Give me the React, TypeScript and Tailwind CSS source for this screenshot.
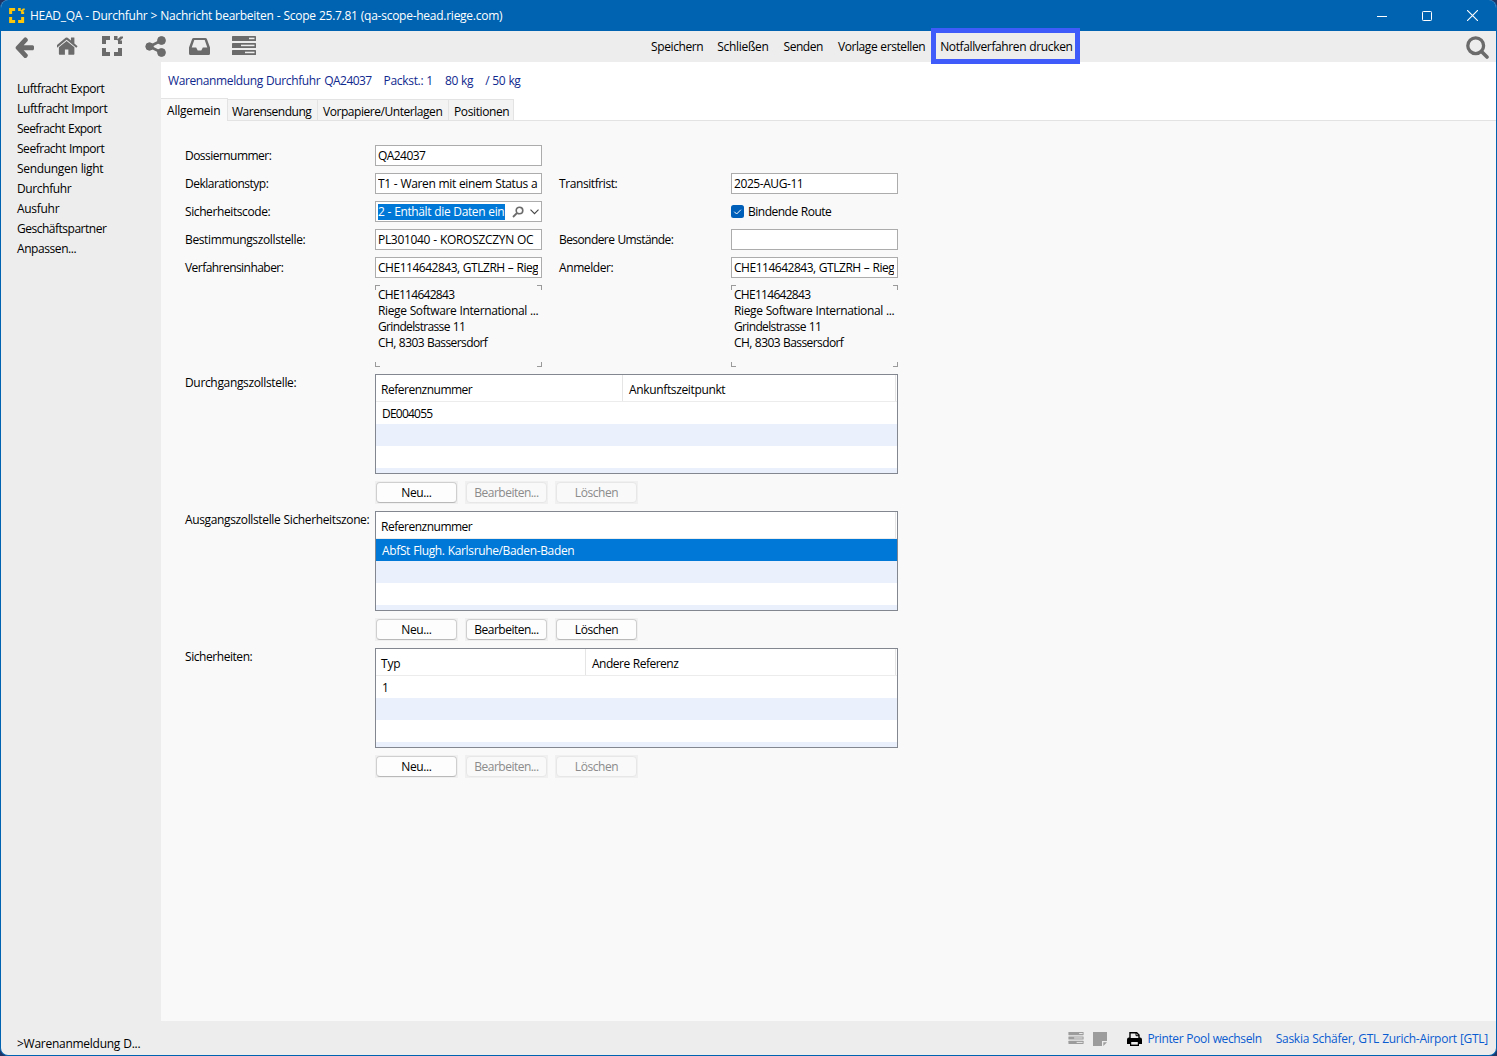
import { useLayoutEffect, useRef, useState } from "react";
import type { ReactNode } from "react";

/* Text whose tracking is fitted to a given width; word gaps keep their natural size. */
function Fit({ w, children, className = "" }: { w: number; children: string; className?: string }) {
  const ref = useRef<HTMLSpanElement>(null);
  const [spacing, setSpacing] = useState(0);
  useLayoutEffect(() => {
    if (ref.current) {
      const letters = children.replace(/ /g, "").length;
      const natural = ref.current.getBoundingClientRect().width - spacing * letters;
      setSpacing((w - 0.7 - natural) / letters);
    }
  }, [w, children]);
  return (
    <span
      ref={ref}
      className={`inline-block whitespace-pre ${className}`}
      style={{ letterSpacing: `${spacing}px`, wordSpacing: `${-spacing}px` }}
    >
      {children}
    </span>
  );
}

const nav: [string, number][] = [
  ["Luftfracht Export", 88],
  ["Luftfracht Import", 91],
  ["Seefracht Export", 85],
  ["Seefracht Import", 88],
  ["Sendungen light", 87],
  ["Durchfuhr", 55],
  ["Ausfuhr", 43],
  ["Geschäftspartner", 90],
  ["Anpassen...", 60],
];

function ScopeLogo({ className, color }: { className: string; color: string }) {
  return (
    <svg viewBox="0 0 21 20" className={className} fill={color}>
      <path d="M0 0h8v4H4v4H0zM0 12h4v4h4v4H0zM20 12v8h-8v-4h4v-4zM12 0h3.500v4H12zM16 4.500h4V8h-4zM15.500 4.500V3.300L18.500 0.500H21V2L18 4.500z" />
    </svg>
  );
}

function ArrowIcon() {
  return (
    <svg viewBox="64 160 1600 1570" className="h-[21px] w-5" preserveAspectRatio="none" fill="#6b6b6b">
      <path d="M1664 896v128q0 53-32.500 90.500t-84.500 37.500h-704l293 294q38 36 38 90t-38 90l-75 76q-37 37-90 37-52 0-91-37l-651-652q-37-37-37-90 0-52 37-91l651-650q38-38 91-38 52 0 90 38l75 74q38 38 38 91t-38 91l-293 293h704q52 0 84.500 37.500t32.500 90.500z" />
    </svg>
  );
}

function HomeIcon() {
  return (
    <svg viewBox="50 220 1560 1330" className="h-[18px] w-[21px]" preserveAspectRatio="none" fill="#6b6b6b">
      <path transform="translate(-66 0)" d="M1408 992v480q0 26-19 45t-45 19h-384v-384h-256v384h-384q-26 0-45-19t-19-45v-480q0-1 .5-3t.5-3l575-474 575 474q1 2 1 6zm223-69l-62 74q-8 9-21 11h-3q-13 0-21-7l-692-577-692 577q-12 8-24 7-13-2-21-11l-62-74q-8-10-7-23.500t11-21.500l719-599q32-26 76-26t76 26l244 204v-195q0-14 9-23t23-9h192q14 0 23 9t9 23v408l219 182q10 8 11 21.500t-7 23.500z" />
    </svg>
  );
}

function ShareIcon() {
  return (
    <svg viewBox="0 0 21 21" className="size-[21px]" fill="#6b6b6b" stroke="#6b6b6b">
      <path d="M16.500 4.500L4.500 10.500l12 6" fill="none" strokeWidth="2.600" />
      <circle cx="16.500" cy="4.500" r="3.900" />
      <circle cx="4.500" cy="10.500" r="3.700" />
      <circle cx="16.500" cy="16.500" r="3.900" />
    </svg>
  );
}

function InboxIcon() {
  return (
    <svg viewBox="0 0 21 17" className="h-[17px] w-[21px]" fill="#6b6b6b" fillRule="evenodd">
      <path d="M4.700 0h11.600q1.200 0 1.600 1.100L21 9.500v6q0 1.500-1.500 1.500h-18Q0 17 0 15.500v-6L3.100 1.100Q3.500 0 4.700 0zM5.300 2L2.700 9.500h4.500l1.500 3h3.600l1.500-3h4.500L15.700 2z" />
    </svg>
  );
}

function ServerIcon({ className, color, gap }: { className: string; color: string; gap: string }) {
  return (
    <svg viewBox="0 0 24 19" className={className}>
      <g fill={color}>
        <rect width="24" height="5" rx="0.600" />
        <rect y="7" width="24" height="5" rx="0.600" />
        <rect y="14" width="24" height="5" rx="0.600" />
      </g>
      <g fill={gap}>
        <rect x="17" y="1.700" width="5.500" height="1.500" />
        <rect x="9" y="8.700" width="13.500" height="1.500" />
        <rect x="13" y="15.700" width="9.500" height="1.500" />
      </g>
    </svg>
  );
}

function Label({ w, children }: { w: number; children: string }) {
  return <div className="h-[21px] leading-[21px]"><Fit w={w}>{children}</Fit></div>;
}

function Field({ w = 0, children = "" }: { w?: number; children?: string }) {
  return (
    <div className="h-[21px] w-[167px] border border-[#acacac] bg-white pl-[2px] pr-[3px] leading-[19px]">
      <div className="h-[19px] overflow-hidden">{children ? <Fit w={w}>{children}</Fit> : null}</div>
    </div>
  );
}

function Address() {
  return (
    <div className="relative h-[82px] w-[167px] pl-[3px] pt-[2px] leading-4">
      <i className="absolute left-0 top-0 size-[5px] border-l border-t border-[#9a9a9a]" />
      <i className="absolute right-0 top-0 size-[5px] border-r border-t border-[#9a9a9a]" />
      <i className="absolute bottom-0 left-0 size-[5px] border-b border-l border-[#9a9a9a]" />
      <i className="absolute bottom-0 right-0 size-[5px] border-b border-r border-[#9a9a9a]" />
      <div className="h-4"><Fit w={77}>CHE114642843</Fit></div>
      <div className="h-4"><Fit w={161}>Riege Software International ...</Fit></div>
      <div className="h-4"><Fit w={88}>Grindelstrasse 11</Fit></div>
      <div className="h-4"><Fit w={110}>CH, 8303 Bassersdorf</Fit></div>
    </div>
  );
}

type Cell = [string, number];

function Table({ first, firstClass, second, row, selected }: {
  first: Cell; firstClass: string; second?: Cell; row: Cell; selected?: boolean;
}) {
  return (
    <div className="flex h-[100px] w-[523px] flex-col overflow-hidden border border-[#828790] bg-white">
      <div className="flex h-[27px] shrink-0 border-b border-[#ececec] pr-px leading-[29px]">
        <div className={`pl-[5px] ${firstClass}`}><Fit w={first[1]}>{first[0]}</Fit></div>
        {second && <div className="flex-1 border-r border-[#e5e5e5] pl-[6px]"><Fit w={second[1]}>{second[0]}</Fit></div>}
      </div>
      <div className={`h-[22px] shrink-0 pl-[6px] leading-[24px] ${selected ? "bg-[#0078d7] text-white" : ""}`}>
        <Fit w={row[1]}>{row[0]}</Fit>
      </div>
      <div className="h-[22px] shrink-0 bg-[#eaf1fd]" />
      <div className="h-[22px] shrink-0" />
      <div className="h-[22px] shrink-0 bg-[#eaf1fd]" />
    </div>
  );
}

function Button({ w, off, children }: { w: number; off?: boolean; children: string }) {
  return (
    <div className="h-[23px] w-[83px] bg-[#f0f0f0] p-px">
      <div className={off
        ? "h-[21px] rounded-[4px] border border-[#e7e7e7] bg-[#f9f9f9] text-center leading-[19px] text-[#8b8b8b]"
        : "h-[21px] rounded-[4px] border border-[#cfcfcf] border-b-[#b9b9b9] bg-[#fdfdfd] text-center leading-[19px]"}>
        <Fit w={w}>{children}</Fit>
      </div>
    </div>
  );
}

function Section({ label, labelW, off, children }: { label: string; labelW: number; off: boolean; children: ReactNode }) {
  return (
    <section className="flex h-[137px]">
      <div className="w-[190px] leading-[18px]"><Fit w={labelW}>{label}</Fit></div>
      <div>
        {children}
        <div className="mt-[7px] flex gap-[7px]">
          <Button w={31}>Neu...</Button>
          <Button w={65} off={off}>Bearbeiten...</Button>
          <Button w={44} off={off}>Löschen</Button>
        </div>
      </div>
    </section>
  );
}

function TabItem({ w, className, children }: { w: number; className: string; children: string }) {
  return (
    <div className={`h-[21px] border-r border-t border-[#e3e3e3] bg-[#f3f3f3] leading-[23px] ${className}`}>
      <Fit w={w}>{children}</Fit>
    </div>
  );
}

export default function App() {
  return (
    <div className="h-[1056px] w-[1497px] overflow-hidden bg-[#1f3566] font-['Open_Sans','Noto_Sans',sans-serif] text-[12px] text-black">
      <div className="flex h-full flex-col overflow-hidden rounded-[8px] border border-t-0 border-[#0063b1] bg-[#ededed]">
        <header className="flex h-[31px] shrink-0 items-center bg-[#0063b1] pl-2 text-white">
          <ScopeLogo className="-mt-px h-[15px] w-4" color="#fdc60b" />
          <Fit w={473} className="ml-[5px]">HEAD_QA - Durchfuhr &gt; Nachricht bearbeiten - Scope 25.7.81 (qa-scope-head.riege.com)</Fit>
          <div className="ml-auto mr-[18px] flex items-center gap-[35px]">
            <svg viewBox="0 0 10 10" className="size-[10px]" stroke="#fff"><path d="M0 5.500h10" /></svg>
            <svg viewBox="0 0 10 10" className="size-[10px]" stroke="#fff" fill="none"><rect x=".5" y=".5" width="9" height="9" rx=".8" /></svg>
            <svg viewBox="0 0 10 10" className="size-[11px]" stroke="#fff"><path d="M0 0l10 10M10 0L0 10" /></svg>
          </div>
        </header>

        <div className="flex h-[31px] shrink-0 items-start">
          <div className="flex w-[649px] items-start pl-[13px]">
            <div className="w-[43px] pt-[6px]"><ArrowIcon /></div>
            <div className="w-[45px] pt-[6px]"><HomeIcon /></div>
            <div className="w-[43px] pt-[5px]"><ScopeLogo className="h-5 w-[21px]" color="#6b6b6b" /></div>
            <div className="w-[44px] pt-[5px]"><ShareIcon /></div>
            <div className="w-[43px] pt-[7px]"><InboxIcon /></div>
            <ServerIcon className="mt-[5px] h-[19px] w-6" color="#6b6b6b" gap="#ededed" />
          </div>
          <nav className="flex h-[31px] flex-1 items-start leading-8">
            <Fit w={53} className="ml-px">Speichern</Fit>
            <Fit w={52} className="ml-[14px]">Schließen</Fit>
            <Fit w={40} className="ml-[15px]">Senden</Fit>
            <Fit w={88} className="ml-[15px]">Vorlage erstellen</Fit>
            <div className="relative z-10 -mt-[3px] ml-[6px] h-[36px] w-[149px] border-[5px] border-[#3f5bfa] pl-[4px] leading-7">
              <Fit w={133}>Notfallverfahren drucken</Fit>
            </div>
          </nav>
          <svg viewBox="0 0 23 23" className="mr-[7px] mt-[5px] size-[23px]" fill="none" stroke="#6b6b6b">
            <circle cx="9.700" cy="9.700" r="7.900" strokeWidth="3.300" />
            <path d="M15.500 15.500l5.500 5.500" strokeWidth="3.600" strokeLinecap="round" />
          </svg>
        </div>

        <div className="flex min-h-0 flex-1">
          <aside className="flex w-40 shrink-0 flex-col pl-4 pt-[17px]">
            {nav.map(([t, w]) => (
              <div key={t} className="h-5 leading-5"><Fit w={w}>{t}</Fit></div>
            ))}
            <div className="mb-px mt-auto leading-5"><Fit w={124}>&gt;Warenanmeldung D...</Fit></div>
          </aside>

          <main className="flex min-w-0 flex-1 flex-col">
            <div className="flex h-9 shrink-0 bg-white pl-[7px] leading-[38px] text-[#10298e]">
              <Fit w={153}>Warenanmeldung Durchfuhr</Fit>
              <Fit w={48} className="ml-1">QA24037</Fit>
              <Fit w={50} className="ml-3">Packst.: 1</Fit>
              <Fit w={29} className="ml-3">80 kg</Fit>
              <Fit w={36} className="ml-3">/ 50 kg</Fit>
            </div>
            <div className="flex h-[23px] shrink-0 items-end bg-white">
              <div className="h-[23px] w-[67px] border-r border-t border-[#e3e3e3] bg-[#f9f9f9] pl-[6px] leading-[24px]"><Fit w={54}>Allgemein</Fit></div>
              <div className="flex flex-1 border-b border-[#e3e3e3]">
                <TabItem w={80} className="w-[90px] pl-1">Warensendung</TabItem>
                <TabItem w={120} className="w-[131px] pl-[5px]">Vorpapiere/Unterlagen</TabItem>
                <TabItem w={56} className="w-[65px] pl-[5px]">Positionen</TabItem>
              </div>
            </div>

            <div className="flex-1 bg-[#f9f9f9] pl-6 pt-6">
              <div className="grid grid-cols-[190px_184px_172px_167px] gap-y-[7px]">
                <Label w={87}>Dossiernummer:</Label>
                <Field w={48}>QA24037</Field>
                <div /><div />

                <Label w={84}>Deklarationstyp:</Label>
                <Field w={160}>T1 - Waren mit einem Status a</Field>
                <Label w={59}>Transitfrist:</Label>
                <Field w={70}>2025-AUG-11</Field>

                <Label w={86}>Sicherheitscode:</Label>
                <div className="flex h-[21px] w-[167px] items-center border border-[#acacac] bg-white pl-[2px]">
                  <div className="h-4 w-[127px] overflow-hidden bg-[#0078d7] leading-4 text-white"><Fit w={127}>2 - Enthält die Daten ein</Fit></div>
                  <svg viewBox="0 0 12 12" className="ml-[7px] size-3" fill="none" stroke="#6b6b6b"><circle cx="7.500" cy="4.500" r="3.300" strokeWidth="1.600" /><path d="M5 7L1 11" strokeWidth="1.800" /></svg>
                  <svg viewBox="0 0 9 6" className="ml-[6px] h-[6px] w-[9px]" fill="none" stroke="#444"><path d="M.5.700l4 4 4-4" strokeWidth="1.100" /></svg>
                </div>
                <div />
                <div className="flex h-[21px] items-center">
                  <svg viewBox="0 0 13 13" className="size-[13px]"><rect width="13" height="13" rx="2.500" fill="#005fb8" /><path d="M3.300 6.700l2.300 2.300 4.300-4.300" fill="none" stroke="#fff" strokeWidth="1" /></svg>
                  <Fit w={84} className="ml-1">Bindende Route</Fit>
                </div>

                <Label w={121}>Bestimmungszollstelle:</Label>
                <Field w={156}>PL301040 - KOROSZCZYN OC</Field>
                <Label w={115}>Besondere Umstände:</Label>
                <Field />

                <Label w={99}>Verfahrensinhaber:</Label>
                <Field w={161}>CHE114642843, GTLZRH – Rieg</Field>
                <Label w={55}>Anmelder:</Label>
                <Field w={161}>CHE114642843, GTLZRH – Rieg</Field>

                <div /><Address /><div /><Address />
              </div>

              <div className="mt-[7px]">
                <Section label="Durchgangszollstelle:" labelW={112} off>
                  <Table first={["Referenznummer", 92]} firstClass="w-[247px] border-r border-[#e5e5e5]" second={["Ankunftszeitpunkt", 97]} row={["DE004055", 51]} />
                </Section>
                <Section label="Ausgangszollstelle Sicherheitszone:" labelW={185} off={false}>
                  <Table first={["Referenznummer", 92]} firstClass="flex-1 border-r border-[#e5e5e5]" row={["AbfSt Flugh. Karlsruhe/Baden-Baden", 193]} selected />
                </Section>
                <Section label="Sicherheiten:" labelW={68} off>
                  <Table first={["Typ", 20]} firstClass="w-[210px] border-r border-[#e5e5e5]" second={["Andere Referenz", 87]} row={["1", 7]} />
                </Section>
              </div>
            </div>

            <footer className="flex h-[34px] shrink-0 items-center pr-2 text-[#0a5bd0]">
              <div className="ml-auto flex items-center">
                <ServerIcon className="h-3 w-4" color="#9c9c9c" gap="#ededed" />
                <svg viewBox="0 0 14 14" className="ml-[9px] mt-px size-[14px]" fill="#9c9c9c"><path d="M0 0h14v9H9v5H0zM10.300 10.300H14L10.300 14z" /></svg>
                <svg viewBox="0 0 15 14" className="ml-5 mt-px h-[14px] w-[15px]">
                  <path d="M0 7.500Q0 5.500 2 5.500h11q2 0 2 2V12h-3v2H3v-2H0z" />
                  <path d="M3 6V.700h6.700L12 3v3" fill="#ededed" stroke="#000" strokeWidth="1.400" />
                  <path d="M9 1v2.700h3" fill="none" stroke="#000" />
                  <path d="M4.200 10h6.600v2.600H4.200z" fill="#ededed" />
                </svg>
                <Fit w={115} className="ml-[5px] mt-[2px]">Printer Pool wechseln</Fit>
                <Fit w={213} className="ml-[14px] mt-[2px]">Saskia Schäfer, GTL Zurich-Airport [GTL]</Fit>
              </div>
            </footer>
          </main>
        </div>
      </div>
    </div>
  );
}
